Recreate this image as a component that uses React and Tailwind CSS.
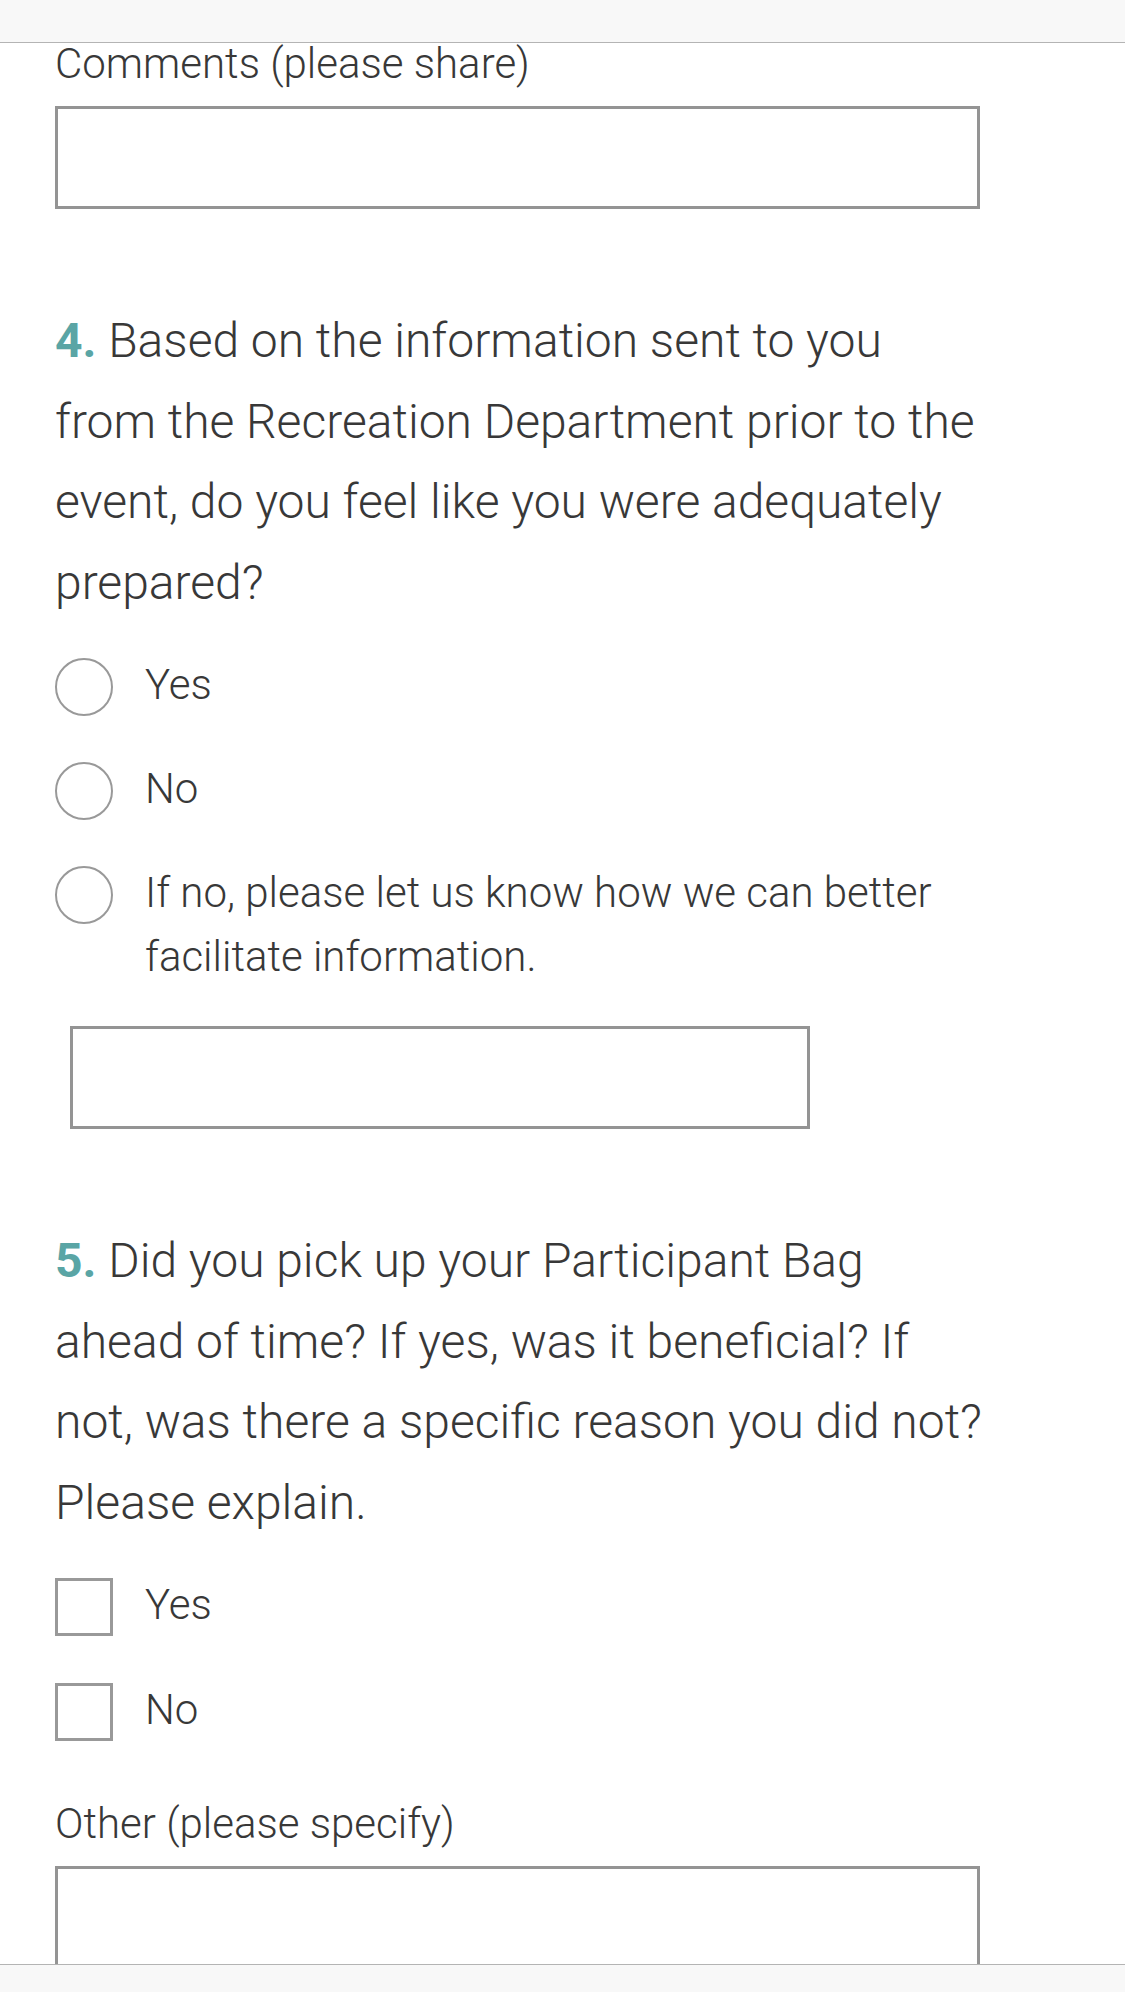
import React from 'react';

const font = { fontFamily: 'Roboto, "Liberation Sans", sans-serif' };

const Question = ({ num, children }) => (
  <p className="w-[928px] text-[48px] leading-[80.5px] font-light text-[#383838]">
    <span className="font-bold text-[#5aa5a5]">{num}.</span> {children}
  </p>
);

const Option = ({ type, label }) => (
  <div className="flex items-start gap-[32px]">
    <span
      className={`mt-[5px] w-[58px] h-[58px] shrink-0 border-[#999999] bg-white ${
        type === 'radio' ? 'rounded-full border-[2px]' : 'border-[3px]'
      }`}
    />
    <span className="text-[42px] leading-[64px] font-light text-[#383838] max-w-[800px]">{label}</span>
  </div>
);

const TextBox = ({ className }) => (
  <div className={`h-[103px] border-[3px] border-[#949494] bg-white ${className}`} />
);

export default function App() {
  return (
    <div className="w-[1125px] h-[1992px] flex flex-col overflow-hidden bg-white" style={font}>
      {/* barra superior */}
      <div className="h-[43px] shrink-0 bg-[#f8f8f8] border-b border-[#b4b4b4]" />

      <main className="flex-1 overflow-hidden pl-[55px]">
        <p className="text-[42px] leading-[48px] -mt-[3px] font-light text-[#383838]">Comments (please share)</p>
        <TextBox className="mt-[18px] w-[925px]" />

        <div className="mt-[92px]">
          <Question num="4">
            Based on the information sent to you from the Recreation Department prior to the event, do you
            feel like you were adequately prepared?
          </Question>
        </div>

        <div className="mt-[30px] flex flex-col gap-[40px]">
          <Option type="radio" label="Yes" />
          <Option type="radio" label="No" />
          <Option type="radio" label="If no, please let us know how we can better facilitate information." />
        </div>

        <TextBox className="mt-[37px] ml-[15px] w-[740px]" />

        <div className="mt-[92px]">
          <Question num="5">
            Did you pick up your Participant Bag ahead of time? If yes, was it beneficial? If not, was there a
            specific reason you did not? Please explain.
          </Question>
        </div>

        <div className="mt-[30px] flex flex-col gap-[41px]">
          <Option type="checkbox" label="Yes" />
          <Option type="checkbox" label="No" />
        </div>

        <p className="mt-[50px] text-[42px] leading-[64px] font-light text-[#383838]">Other (please specify)</p>
        <TextBox className="mt-[10px] w-[925px]" />
      </main>

      {/* barra inferior */}
      <div className="h-[28px] shrink-0 bg-[#f8f8f8] border-t border-[#b4b4b4]" />
    </div>
  );
}
